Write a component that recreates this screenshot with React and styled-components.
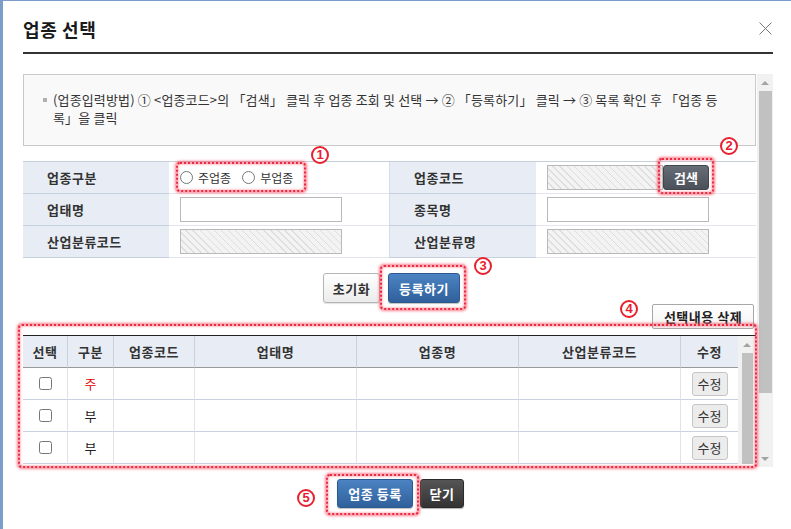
import React from "react";
import styled, { createGlobalStyle } from "styled-components";

const Global = createGlobalStyle`
  html, body { margin: 0; padding: 0; background: #fff; }
  body { font-family: "Noto Sans CJK KR", "Noto Sans", sans-serif; color: #333; }
  * { box-sizing: border-box; }
`;

const Frame = styled.div`
  position: relative;
  width: 791px;
  height: 529px;
  border-left: 3px solid #7b9dcb;
  border-top: 1px solid #7b9dcb;
  padding: 0 18px 0 20px;
  overflow: hidden;
  background: #fff;
`;

const Header = styled.header`
  display: flex;
  align-items: center;
  justify-content: space-between;
  height: 53px;
  padding-top: 4px;
  border-bottom: 2px solid #333;
`;

const Title = styled.h1`
  margin: 0;
  font-size: 18px;
  line-height: 20px;
  letter-spacing: 0.6px;
  font-weight: 700;
  color: #1a1a1a;
`;

const CloseBtn = styled.button`
  border: 0;
  background: none;
  padding: 0;
  width: 13px;
  height: 13px;
  display: flex;
  margin-right: 1px;
  cursor: pointer;
`;

const ScrollArea = styled.div`
  display: flex;
  gap: 1px;
  height: 393px;
  margin-top: 20px;
`;

const ScrollContent = styled.div`
  width: 733px;
  flex-shrink: 0;
  overflow: hidden;
`;

const VScroll = styled.div`
  width: ${(p) => p.$w}px;
  flex-shrink: 0;
  background: #f1f1f1;
  display: flex;
  flex-direction: column;
  align-items: center;
`;

const ArrowBox = styled.div`
  height: 17px;
  width: 100%;
  flex-shrink: 0;
  display: flex;
  align-items: center;
  justify-content: center;
  &::before {
    content: "";
    width: 0;
    height: 0;
    border-left: 4px solid transparent;
    border-right: 4px solid transparent;
    ${(p) => (p.$down ? "border-top: 4px solid #a3a3a3;" : "border-bottom: 4px solid #a3a3a3;")}
  }
`;

const Thumb = styled.div`
  width: ${(p) => p.$w}px;
  ${(p) => (p.$h ? `height: ${p.$h}px; flex-shrink: 0;` : "flex: 1;")}
  background: #c1c1c1;
`;

const Track = styled.div`
  flex: 1;
`;

const InfoBox = styled.div`
  height: 72px;
  border: 1px solid #c9c9c9;
  background: #f9f9f9;
  padding: 16px 20px 0 29px;
`;

const InfoText = styled.p`
  position: relative;
  margin: 0;
  font-size: 13px;
  line-height: 18px;
  letter-spacing: 0.15px;
  color: #333;
  white-space: nowrap;
  &::before {
    content: "";
    position: absolute;
    left: -10px;
    top: 7px;
    width: 4px;
    height: 4px;
    background: #b0b0b0;
  }
`;

const FormGrid = styled.div`
  display: grid;
  grid-template-columns: 146px 220px 147px 220px;
  grid-auto-rows: 32px;
  margin-top: 15px;
  border-top: 1px solid #c6cfdc;
`;

const LabelCell = styled.div`
  display: flex;
  align-items: center;
  padding-left: 24px;
  background: #e8edf5;
  border-bottom: 1px solid #c6cfdc;
  ${(p) => (p.$second ? "border-left: 1px solid #d6dde7;" : "")}
  font-size: 13px;
  letter-spacing: 0.5px;
  font-weight: 700;
  color: #333;
`;

const ValueCell = styled.div`
  display: flex;
  align-items: center;
  padding-left: 11px;
  border-bottom: 1px solid #e3e7ed;
`;

const TextInput = styled.input`
  width: ${(p) => p.$w || 162}px;
  height: 25px;
  margin: 0;
  border: 1px solid #b9b9b9;
  border-radius: 0;
  padding: 0 4px;
  font-family: inherit;
  font-size: 12px;
  outline: none;
  background: ${(p) =>
    p.disabled
      ? "repeating-linear-gradient(45deg, #f3f3f3 0px, #f3f3f3 4px, #dedede 4px, #dedede 5px)"
      : "#fff"};
`;

const RadioGroup = styled.div`
  display: flex;
  align-items: center;
  gap: 11px;
`;

const RadioLabel = styled.label`
  display: flex;
  align-items: center;
  gap: 5px;
  font-size: 12px;
  color: #333;
  input {
    margin: 0;
    width: 13px;
    height: 13px;
  }
`;

const SearchBtn = styled.button`
  width: 46px;
  height: 25px;
  margin: 0;
  border: 1px solid #41464d;
  border-radius: 3px;
  background: linear-gradient(#666d77, #4b5059);
  color: #fff;
  font-family: inherit;
  font-size: 13px;
  font-weight: 700;
  padding: 0;
`;

const BtnRow = styled.div`
  display: flex;
  justify-content: center;
  gap: 8px;
  margin-top: 15px;
  padding-left: 4px;
`;

const Btn = styled.button`
  height: ${(p) => p.$h || 30}px;
  width: ${(p) => p.$w}px;
  margin: 0;
  padding: 0;
  border-radius: 3px;
  font-family: inherit;
  font-size: 13px;
  letter-spacing: 0.5px;
  font-weight: 700;
  cursor: pointer;
  ${(p) =>
    p.$variant === "blue"
      ? `
    border: 1px solid #2b5a91;
    background: linear-gradient(#4c83c2, #2f609c);
    color: #fff;
    box-shadow: 0 1px 1px rgba(0,0,0,.25);
  `
      : p.$variant === "dark"
      ? `
    border: 1px solid #2a2a2a;
    background: linear-gradient(#555, #333);
    color: #fff;
    box-shadow: 0 1px 1px rgba(0,0,0,.3);
  `
      : `
    border: 1px solid #b5b5b5;
    background: linear-gradient(#fff, #ebebeb);
    color: #333;
    box-shadow: 0 1px 1px rgba(0,0,0,.12);
  `}
`;

const DeleteRow = styled.div`
  display: flex;
  justify-content: flex-end;
  margin-top: 1px;
  padding-right: 2px;
`;

const DeleteBtn = styled.button`
  width: 102px;
  height: 25px;
  margin: 0;
  padding: 0;
  border: 1px solid #a8a8a8;
  border-radius: 2px;
  background: linear-gradient(#fff, #f3f3f3);
  font-family: inherit;
  font-size: 13px;
  letter-spacing: 0.5px;
  font-weight: 700;
  color: #222;
`;

const ListWrap = styled.div`
  display: flex;
  margin-top: 6px;
  border-top: 1px solid #222;
`;

const ListGrid = styled.div`
  width: 715px;
  flex-shrink: 0;
  display: grid;
  grid-template-columns: 45px 46px 81px 162px 162px 162px 57px;
  grid-auto-rows: 32px;
`;

const HeadCell = styled.div`
  display: flex;
  align-items: center;
  justify-content: center;
  background: #e8edf5;
  border-bottom: 1px solid #9a9a9a;
  border-right: ${(p) => (p.$last ? "0" : "1px solid #c9d1dd")};
  font-size: 13px;
  letter-spacing: 0.5px;
  font-weight: 700;
  color: #333;
`;

const BodyCell = styled.div`
  display: flex;
  align-items: center;
  justify-content: center;
  border-bottom: 1px solid #c9d3df;
  border-right: ${(p) => (p.$last ? "0" : "1px solid #e0e4ea")};
  font-size: 13px;
  color: ${(p) => (p.$red ? "#e00000" : "#222")};
  input {
    margin: 0;
    width: 13px;
    height: 13px;
  }
`;

const EditBtn = styled.button`
  width: 36px;
  height: 24px;
  margin: 0;
  padding: 0;
  border: 1px solid #c6c6c6;
  border-radius: 3px;
  background: #ececec;
  font-family: inherit;
  font-size: 13px;
  color: #333;
`;

const Footer = styled.div`
  display: flex;
  justify-content: center;
  gap: 7px;
  margin-top: 12px;
  padding-left: 5px;
`;

/* annotation overlay (red marker rings + circled numbers) */
const Ring = styled.div`
  position: absolute;
  left: ${(p) => p.$x - 3}px;
  top: ${(p) => p.$y - 1}px;
  width: ${(p) => p.$w}px;
  height: ${(p) => p.$h}px;
  border: 3px solid rgba(246, 70, 90, 0.45);
  outline: 2px dotted rgba(232, 20, 45, 0.85);
  outline-offset: -3px;
  border-radius: 5px;
  box-shadow: 0 0 2px 1px rgba(255, 90, 110, 0.35), inset 0 0 2px 1px rgba(255, 90, 110, 0.35);
  pointer-events: none;
`;

const Badge = styled.span`
  position: absolute;
  left: ${(p) => p.$x - 3}px;
  top: ${(p) => p.$y - 1}px;
  width: 18px;
  height: 18px;
  border: 2px solid #e8202e;
  border-radius: 50%;
  background: #fff;
  color: #e8202e;
  font-family: "Liberation Sans", Arial, sans-serif;
  font-size: 13px;
  font-weight: 700;
  line-height: 14px;
  text-align: center;
`;

function Scrollbar({ w, thumbW, thumbH, down }) {
  return (
    <VScroll $w={w}>
      <ArrowBox />
      <Thumb $w={thumbW} $h={thumbH} />
      {down && (
        <>
          <Track />
          <ArrowBox $down />
        </>
      )}
    </VScroll>
  );
}

const rows = [
  { kind: "주", red: true },
  { kind: "부" },
  { kind: "부" },
];

export default function App() {
  return (
    <>
      <Global />
      <Frame>
        <Header>
          <Title>업종 선택</Title>
          <CloseBtn aria-label="닫기">
            <svg width="13" height="13" viewBox="0 0 13 13">
              <path d="M0.5 0.5 L12.5 12.5 M12.5 0.5 L0.5 12.5" stroke="#777" strokeWidth="1" fill="none" />
            </svg>
          </CloseBtn>
        </Header>

        <ScrollArea>
          <ScrollContent>
            <InfoBox>
              <InfoText>
                (업종입력방법) ① {"<업종코드>"}의 「검색」 클릭 후 업종 조회 및 선택 → ② 「등록하기」 클릭 → ③ 목록 확인 후 「업종 등
                <br />
                록」을 클릭
              </InfoText>
            </InfoBox>

            <FormGrid>
              <LabelCell>업종구분</LabelCell>
              <ValueCell>
                <RadioGroup>
                  <RadioLabel>
                    <input type="radio" name="kind" />
                    주업종
                  </RadioLabel>
                  <RadioLabel>
                    <input type="radio" name="kind" />
                    부업종
                  </RadioLabel>
                </RadioGroup>
              </ValueCell>
              <LabelCell $second>업종코드</LabelCell>
              <ValueCell>
                <TextInput disabled $w={116} />
                <SearchBtn>검색</SearchBtn>
              </ValueCell>

              <LabelCell>업태명</LabelCell>
              <ValueCell>
                <TextInput />
              </ValueCell>
              <LabelCell $second>종목명</LabelCell>
              <ValueCell>
                <TextInput />
              </ValueCell>

              <LabelCell>산업분류코드</LabelCell>
              <ValueCell>
                <TextInput disabled />
              </ValueCell>
              <LabelCell $second>산업분류명</LabelCell>
              <ValueCell>
                <TextInput disabled />
              </ValueCell>
            </FormGrid>

            <BtnRow>
              <Btn $w={57}>초기화</Btn>
              <Btn $w={72} $variant="blue">등록하기</Btn>
            </BtnRow>

            <DeleteRow>
              <DeleteBtn>선택내용 삭제</DeleteBtn>
            </DeleteRow>

            <ListWrap>
              <ListGrid>
                <HeadCell>선택</HeadCell>
                <HeadCell>구분</HeadCell>
                <HeadCell>업종코드</HeadCell>
                <HeadCell>업태명</HeadCell>
                <HeadCell>업종명</HeadCell>
                <HeadCell>산업분류코드</HeadCell>
                <HeadCell $last>수정</HeadCell>
                {rows.map((r, i) => (
                  <React.Fragment key={i}>
                    <BodyCell>
                      <input type="checkbox" />
                    </BodyCell>
                    <BodyCell $red={r.red}>{r.kind}</BodyCell>
                    <BodyCell />
                    <BodyCell />
                    <BodyCell />
                    <BodyCell />
                    <BodyCell $last>
                      <EditBtn>수정</EditBtn>
                    </BodyCell>
                  </React.Fragment>
                ))}
              </ListGrid>
              <Scrollbar w={18} thumbW={11} />
            </ListWrap>
          </ScrollContent>
          <Scrollbar w={16} thumbW={13} thumbH={302} down />
        </ScrollArea>

        <Footer>
          <Btn $w={76} $h={29} $variant="blue">업종 등록</Btn>
          <Btn $w={44} $h={29} $variant="dark">닫기</Btn>
        </Footer>

        <Ring $x={175} $y={161} $w={132} $h={32} />
        <Ring $x={657} $y={157} $w={58} $h={38} />
        <Ring $x={379} $y={264} $w={88} $h={47} />
        <Ring $x={17} $y={323} $w={741} $h={146} />
        <Ring $x={325} $y={473} $w={95} $h={43} />

        <Badge $x={311} $y={146}>1</Badge>
        <Badge $x={720} $y={137}>2</Badge>
        <Badge $x={474} $y={257}>3</Badge>
        <Badge $x={620} $y={300}>4</Badge>
        <Badge $x={297} $y={489}>5</Badge>
      </Frame>
    </>
  );
}
